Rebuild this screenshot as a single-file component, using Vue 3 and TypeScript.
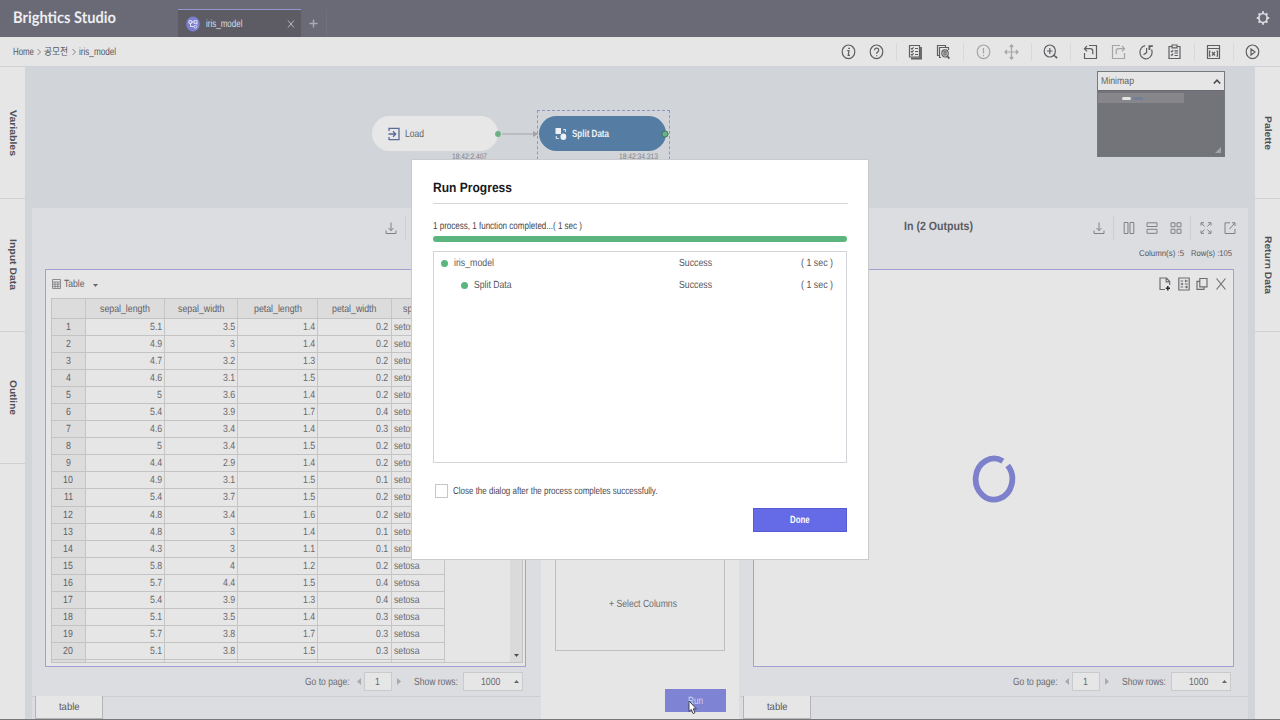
<script setup lang="ts">
import { h } from 'vue'

const FAMILY = '"Liberation Sans", "Noto Sans CJK KR", sans-serif'
const CONDENSE = 0.845
const pen = document.createElement('canvas').getContext('2d')

function naturalWidth(text: string, size: number, weight: number): number {
  if (!pen) return text.length * size * 0.5
  pen.font = `${weight} ${size}px ${FAMILY}`
  return pen.measureText(text).width * CONDENSE
}

interface LabelProps {
  t: string
  w?: number
  s?: number
  b?: number
  family?: string
  vertical?: boolean
}

// Condensed single-line text, fitted to the width `w` when one is given.
function Label(props: LabelProps) {
  const size = props.s ?? 10.4
  const weight = props.b ?? 400
  const width = props.w ?? naturalWidth(props.t, size, weight)
  const height = Math.round(size * 1.2)
  const base = height / 2 + size * 0.355 - 0.8
  const v = props.vertical
  return h('svg', { width: v ? height : width, height: v ? width : height, overflow: 'visible' }, [
    h('text', {
      x: 0,
      y: base,
      transform: v ? `translate(${height} 0) rotate(90)` : undefined,
      textLength: width,
      lengthAdjust: 'spacingAndGlyphs',
      'text-rendering': 'geometricPrecision',
      fill: 'currentColor',
      'font-family': props.family ?? FAMILY,
      'font-size': size,
      'font-weight': weight,
    }, props.t),
  ])
}
Label.props = { t: String, w: Number, s: Number, b: Number, family: String, vertical: Boolean }

interface Tool { id: string; path?: string; faint?: boolean; heavy?: string }
const circle = 'M8.5 2A6.3 6.8 0 1 1 8.5 15.6A6.3 6.8 0 1 1 8.5 2'
const tools: Tool[] = [
  { id: 'info', path: circle + 'M7.2 7.6H9L8.2 12.4H10', heavy: 'M9.1 4.8V5.9' },
  { id: 'help', path: circle + 'M6.5 7.2C6.5 4.5 10.7 4.5 10.7 7.2C10.7 9 8.6 9 8.6 10.8M8.6 12.2V13.2' },
  { id: 's1' },
  { id: 'checklist', path: 'M2.5 2.5H12.5V14H2.5ZM4 5.3L5 6.2L6.6 4.4M4 8.3L5 9.2L6.6 7.4M4 11.3L5 12.2L6.6 10.4M8 5.5H11M8 8.5H11M8 11.5H11', heavy: 'M14 4V15.5H4' },
  { id: 'inspect', path: 'M4 12.5H2.5V2.5H10.5V4M6 14.5H4.5V4.5H13.5V7M10 6.8A3.2 3.6 0 1 1 10 14A3.2 3.6 0 1 1 10 6.8M9 8.8H11V12H9Z', heavy: 'M12.2 13L14.4 15.6' },
  { id: 's2' },
  { id: 'alert', path: circle + 'M8.5 5V10.5M8.5 12V13.3', faint: true },
  { id: 'move', path: 'M8.5 2V16M2 9H15M6.7 4L8.5 2L10.3 4M6.7 14L8.5 16L10.3 14M4 7L2 9L4 11M13 7L15 9L13 11', faint: true },
  { id: 's3' },
  { id: 'zoom', path: 'M7.8 2A5.6 6 0 1 1 7.8 14A5.6 6 0 1 1 7.8 2M7.8 5V11M5 8H10.6M11.8 12.2L13 13.3', heavy: 'M13.2 13L15 15.2' },
  { id: 's4' },
  { id: 'undo', path: 'M2.5 10V15.5H14.5V2.5H7M2.5 5.7H8.3Q10.8 5.7 10.8 8.3V11.3M5 3L2.4 5.7L5 8.4' },
  { id: 'redo', path: 'M10 2.5H2.5V15.5H14.5V10M6.2 11.3V8.3Q6.2 5.7 8.7 5.7H14.5M12 3L14.6 5.7L12 8.4', faint: true },
  { id: 'history', path: 'M7.2 2.7A6.1 6.6 0 1 0 13.6 6.5M8.6 5V9.6L5.5 11.8', heavy: 'M11.4 7V3.2H14.8' },
  { id: 'clipboard', path: 'M5.5 3.5H3V15.5H14V3.5H11.5M6 2H11V4.8H6ZM5 8L5.8 8.8L7.2 7.2M5 11.5L5.8 12.3L7.2 10.7M8.5 7.8H12M8.5 10H12M8.5 12.5H12' },
  { id: 's5' },
  { id: 'variable', path: 'M2.5 2.5H14.5V15.5H2.5ZM2.5 5.5H14.5M5.5 8.2H4.5V13.2H5.5M11.5 8.2H12.5V13.2H11.5M7 9L10 12.5M10 9L7 12.5' },
  { id: 's6' },
  { id: 'play', path: circle + 'M7 6V12L11 9Z' },
]

const columns = ['sepal_length', 'sepal_width', 'petal_length', 'petal_width']
const rows: string[][] = [
  ['5.1', '3.5', '1.4', '0.2'], ['4.9', '3', '1.4', '0.2'], ['4.7', '3.2', '1.3', '0.2'],
  ['4.6', '3.1', '1.5', '0.2'], ['5', '3.6', '1.4', '0.2'], ['5.4', '3.9', '1.7', '0.4'],
  ['4.6', '3.4', '1.4', '0.3'], ['5', '3.4', '1.5', '0.2'], ['4.4', '2.9', '1.4', '0.2'],
  ['4.9', '3.1', '1.5', '0.1'], ['5.4', '3.7', '1.5', '0.2'], ['4.8', '3.4', '1.6', '0.2'],
  ['4.8', '3', '1.4', '0.1'], ['4.3', '3', '1.1', '0.1'], ['5.8', '4', '1.2', '0.2'],
  ['5.7', '4.4', '1.5', '0.4'], ['5.4', '3.9', '1.3', '0.4'], ['5.1', '3.5', '1.4', '0.3'],
  ['5.7', '3.8', '1.7', '0.3'], ['5.1', '3.8', '1.5', '0.3'],
]

const leftTabs = [
  { t: 'Variables', w: 46, k: 'a' }, { t: 'Input Data', w: 51, k: 'b' }, { t: 'Outline', w: 35, k: 'b' },
]
const rightTabs = [{ t: 'Palette', w: 34, k: 'a' }, { t: 'Return Data', w: 58, k: 'b' }]

const steps = [
  { name: 'iris_model', w: 40, child: false },
  { name: 'Split Data', w: 37.5, child: true },
]
</script>

<template>
  <div class="app">
    <header class="top">
      <Label class="brand" t="Brightics Studio" :w="103" :s="16" :b="700" family="Lato, sans-serif" />
      <div class="tab">
        <svg width="14" height="16" viewBox="0 0 14 16">
          <ellipse cx="7" cy="8" rx="6.8" ry="7.6" fill="#7c7fd0" />
          <path d="M3 4.7H5.8V7.3H3ZM8 4.7H11V7.3H8ZM5.8 6H8M4.5 7.3V10.5H7.8M11 7.3V8.5" fill="none" stroke="#e4e4f4" />
          <circle cx="9.4" cy="10.7" r="1.4" fill="none" stroke="#e4e4f4" />
        </svg>
        <Label class="tab-name" t="iris_model" :w="36.5" />
        <svg width="8" height="8" viewBox="0 0 8 8"><path d="M1 .5L7 7.5M7 .5L1 7.5" stroke="#b6b7be" /></svg>
      </div>
      <div class="plus">
        <svg width="9" height="9" viewBox="0 0 9 9"><path d="M4.5 .5V8.5M.5 4.5H8.5" stroke="#a9aab2" stroke-width="1.4" /></svg>
      </div>
      <svg class="gear" width="14" height="16" viewBox="0 0 14 16">
        <ellipse cx="7" cy="8" rx="4.1" ry="4.5" fill="none" stroke="#dcdce2" stroke-width="1.7" />
        <path d="M7 3.5V1.2M7 12.5V14.8M3 8H.8M11 8H13.2M4 4.8L2.6 3.3M10 11.2L11.4 12.7M10 4.8L11.4 3.3M4 11.2L2.6 12.7" stroke="#dcdce2" stroke-width="1.9" />
      </svg>
    </header>

    <nav class="bar">
      <div class="crumbs">
        <Label t="Home" :w="21" />
        <svg width="4" height="8" viewBox="0 0 4 8"><path d="M.5 1L3.5 4L.5 7" fill="none" stroke="#85868a" /></svg>
        <Label t="공모전" :w="24" />
        <svg width="4" height="8" viewBox="0 0 4 8"><path d="M.5 1L3.5 4L.5 7" fill="none" stroke="#85868a" /></svg>
        <Label t="iris_model" :w="37" />
      </div>
      <div class="tools">
        <template v-for="tool in tools" :key="tool.id">
          <span v-if="tool.path" class="tool" :class="{ faint: tool.faint }">
            <svg width="17" height="18" viewBox="0 0 17 18" fill="none" stroke="currentColor">
              <path :d="tool.path" stroke-width="1.2" />
              <path v-if="tool.heavy" :d="tool.heavy" stroke-width="1.8" />
            </svg>
          </span>
          <i v-else class="sep" :class="tool.id" />
        </template>
      </div>
    </nav>

    <div class="body">
      <aside class="side left">
        <div v-for="s in leftTabs" :key="s.t" class="side-tab" :class="s.k">
          <Label :t="s.t" :w="s.w" :s="9.5" :b="700" vertical />
        </div>
      </aside>

      <main class="main">
        <section class="canvas">
          <div class="node load">
            <svg width="12" height="14" viewBox="0 0 12 14" fill="none" stroke="#5a6b98" stroke-width="1.3">
              <path d="M1 4V1.3H11V12.7H1V10M.5 7H7.5M5 4.3L7.7 7L5 9.7" />
            </svg>
            <Label t="Load" :w="19" />
          </div>
          <svg class="link" width="44" height="8" viewBox="0 0 44 8">
            <circle cx="3" cy="4" r="2.9" fill="#6cb086" />
            <path d="M7 4H40" stroke="#a3a4a7" stroke-width="1.2" />
            <path d="M38 1L43.5 4L38 7Z" fill="#a3a4a7" />
          </svg>
          <Label class="time t1" t="18:42:2.407" :w="35" :s="8" />
          <div class="selection" />
          <div class="node split">
            <svg width="12" height="14" viewBox="0 0 12 14">
              <path d="M.5 1H6V7H.5Z" fill="#eef2f6" />
              <ellipse cx="8.4" cy="9.8" rx="2.9" ry="3.2" fill="#eef2f6" />
              <path d="M8 2.5H10.4V5M1.3 9V11.5H4" fill="none" stroke="#d5dde6" stroke-width="1.2" />
            </svg>
            <Label t="Split Data" :w="37" :b="700" />
          </div>
          <svg class="port" width="8" height="8" viewBox="0 0 8 8"><circle cx="4" cy="4" r="3.1" fill="#6cb086" stroke="#3c7864" /></svg>
          <Label class="time t2" t="18:42:34.313" :w="39" :s="8" />
          <div class="minimap">
            <div class="mini-head">
              <Label t="Minimap" :w="33" :s="10" />
              <svg width="8" height="5" viewBox="0 0 8 5"><path d="M.8 4.5L4 1.2L7.2 4.5" fill="none" stroke="#4b4c52" stroke-width="1.6" /></svg>
            </div>
            <div class="mini-body">
              <div class="mini-view"><i class="m1" /><i class="m2" /></div>
              <svg class="grip" width="6" height="6" viewBox="0 0 6 6"><path d="M6 0V6H0Z" fill="#a3a4a8" /></svg>
            </div>
          </div>
        </section>

        <section class="panel">
          <div v-for="side in ['in', 'out']" :key="side" class="column" :class="side">
            <div class="head">
              <Label v-if="side === 'out'" class="title" t="In (2 Outputs)" :w="69" :s="12" :b="700" />
              <div class="head-icons">
                <svg class="ic dl" width="12" height="14" viewBox="0 0 12 14"><path d="M1 9.5V12.5H11V9.5M6 1.5V9.5M3.5 7L6 9.7L8.5 7" /></svg>
                <i class="rule" />
                <template v-if="side === 'out'">
                  <svg class="ic c1" width="12" height="14" viewBox="0 0 12 14"><path d="M1.2 1.5H5V12.5H1.2ZM7 1.5H10.8V12.5H7Z" /></svg>
                  <svg class="ic c2" width="12" height="14" viewBox="0 0 12 14"><path d="M1 1.8H11V5.5H1ZM1 8.3H11V12.3H1Z" /></svg>
                  <svg class="ic c3" width="12" height="14" viewBox="0 0 12 14"><path d="M1 1.8H5V5.8H1ZM7 1.8H11V5.8H7ZM1 8.2H5V12.3H1ZM7 8.2H11V12.3H7Z" /></svg>
                  <i class="rule" />
                  <svg class="ic c4" width="12" height="14" viewBox="0 0 12 14"><path d="M1 4.5V1.7H4M1.2 2L4.6 5.4M11 4.5V1.7H8M10.8 2L7.4 5.4M1 9.5V12.3H4M1.2 12L4.6 8.6M11 9.5V12.3H8M10.8 12L7.4 8.6" /></svg>
                  <svg class="ic c5" width="12" height="14" viewBox="0 0 12 14"><path d="M6 1.8H1V12.5H11V8M8 1.8H11V5M10.8 2L5.5 8" /></svg>
                </template>
              </div>
              <div v-if="side === 'out'" class="counts">
                <Label t="Column(s) :5" :w="45" :s="8.4" />
                <Label t="Row(s) :105" :w="41" :s="8.4" />
              </div>
            </div>

            <div v-if="side === 'in'" class="box">
              <div class="chart-type">
                <svg width="9" height="10" viewBox="0 0 9 10" fill="none" stroke="#838387"><path d="M.5 .5H8.5V9.5H.5ZM.5 3H8.5M.5 5.2H8.5M.5 7.4H8.5M3 3V9.5M5.8 3V9.5" stroke-width=".9" /></svg>
                <Label t="Table" :w="20.5" />
                <svg class="caret" width="5" height="3" viewBox="0 0 5 3"><path d="M0 0H5L2.5 3Z" fill="#66676b" /></svg>
              </div>
              <div class="sheet">
                <div class="grid">
                  <div class="row headrow">
                    <div class="cell" />
                    <div v-for="c in columns" :key="c" class="cell"><Label :t="c" /></div>
                    <div class="cell"><Label t="species" /></div>
                  </div>
                  <div v-for="(r, i) in rows" :key="i" class="row">
                    <div class="cell num"><Label :t="String(i + 1)" /></div>
                    <div v-for="(v, j) in r" :key="j" class="cell val"><Label :t="v" /></div>
                    <div class="cell sp"><Label t="setosa" :w="25.5" /></div>
                  </div>
                  <div class="row last">
                    <div v-for="n in 6" :key="n" class="cell" :class="{ num: n === 1 }" />
                  </div>
                </div>
                <div class="scroll">
                  <svg width="5" height="3" viewBox="0 0 5 3"><path d="M0 0H5L2.5 3Z" fill="#4d4e52" /></svg>
                </div>
              </div>
            </div>

            <div v-else class="box">
              <div class="box-icons">
                <svg class="ic" width="12" height="14" viewBox="0 0 12 14"><path d="M6 12.5H1V1H7.5L10.7 4.5V8M7.2 1V4.8H10.7" /><path d="M8.8 9V13.4M6.8 11.2H11" class="plus-mark" /></svg>
                <svg class="ic" width="12" height="14" viewBox="0 0 12 14"><path d="M.8 1H11.2V13H.8ZM2.5 4H5.2M2.5 7H5.2M2.5 10H5.2M6.8 4H9.8M6.8 7H9.8M6.8 10H9.8M7.6 2.8V5.2M4.2 5.8V8.2M8.6 8.8V11.2" /></svg>
                <svg class="ic" width="12" height="14" viewBox="0 0 12 14"><path d="M3.8 1.5H11V9.8H3.8ZM3.8 4.3H1V12.4H8V9.8" /></svg>
                <svg class="ic" width="12" height="14" viewBox="0 0 12 14"><path d="M1.5 1.5L10.5 12.5M10.5 1.5L1.5 12.5" /></svg>
              </div>
              <div class="loading">
                <svg width="44" height="48" viewBox="-22 -24 44 48">
                  <path d="M13.7 -13.5A18.3 20.5 0 1 1 8.8 -17.9" fill="none" stroke="#7d80cb" stroke-width="5.8" />
                </svg>
              </div>
            </div>

            <div class="pager">
              <Label t="Go to page:" :w="44.5" />
              <svg class="prev" width="4" height="7" viewBox="0 0 4 7"><path d="M4 0V7L0 3.5Z" fill="#a9aaae" /></svg>
              <div class="field page"><Label t="1" /></div>
              <svg class="next" width="4" height="7" viewBox="0 0 4 7"><path d="M0 0V7L4 3.5Z" fill="#a9aaae" /></svg>
              <Label class="show" t="Show rows:" :w="44" />
              <div class="field count">
                <Label t="1000" :w="19.5" />
                <svg width="5" height="3" viewBox="0 0 5 3"><path d="M0 3H5L2.5 0Z" fill="#66676b" /></svg>
              </div>
            </div>
            <div class="tabs"><div class="sheet-tab"><Label t="table" :w="20.5" /></div></div>
          </div>

          <div class="middle">
            <div class="drop"><Label t="+ Select Columns" :w="68" /></div>
            <button class="run"><Label t="Run" :w="15" /></button>
          </div>
        </section>
      </main>

      <aside class="side right">
        <div v-for="s in rightTabs" :key="s.t" class="side-tab" :class="s.k">
          <Label :t="s.t" :w="s.w" :s="9.5" :b="700" vertical />
        </div>
      </aside>
    </div>
    <div class="edge" />

    <div class="dialog">
      <div class="dialog-title"><Label t="Run Progress" :w="79" :s="13.4" :b="700" /></div>
      <Label class="status" t="1 process, 1 function completed...( 1 sec )" :w="149" :s="10.2" />
      <div class="progress" />
      <div class="list">
        <div v-for="s in steps" :key="s.name" class="step" :class="{ child: s.child }">
          <i class="dot" />
          <Label class="name" :t="s.name" :w="s.w" />
          <Label class="state" t="Success" :w="33" />
          <Label t="( 1 sec )" :w="32" />
        </div>
      </div>
      <div class="check"><i /><Label t="Close the dialog after the process completes successfully." :w="204.5" :s="10" /></div>
      <button class="done"><Label t="Done" :w="19.5" :b="700" /></button>
    </div>

    <svg class="cursor" width="10" height="15" viewBox="0 0 10 15">
      <path d="M1 1V11.5L3.3 9.4L5 13.6L6.9 12.7L5.3 8.8H8.3Z" fill="#fff" stroke="#333" stroke-width=".9" />
    </svg>
  </div>
</template>

<style>
html, body { margin: 0; overflow: hidden; }
</style>

<style scoped>
.app { width: 1280px; height: 720px; position: relative; overflow: hidden; display: flex; flex-direction: column; background: #d1d4d8; color: #5f6066; font-family: "Liberation Sans", "Noto Sans CJK KR", sans-serif; box-sizing: border-box; }
.app * { box-sizing: border-box; }
svg { display: block; flex: none; }
button { border: 0; padding: 0; display: flex; align-items: center; justify-content: center; }

.top { height: 37px; flex: none; display: flex; align-items: stretch; background: #696a76; color: #eeeef2; }
.brand { margin: 9px 0 0 13px; }
.tab { width: 123px; margin: 9px 0 0 62px; border-top: 1px solid #9497cf; background: #5d5c65; display: flex; align-items: center; padding: 0 6px 0 8px; }
.tab-name { margin: 0 auto 0 6px; color: #dcdce1; }
.plus { width: 26px; margin-top: 9px; border-right: 1px solid #70717c; display: flex; align-items: center; justify-content: center; }
.gear { margin: 10px 10px 0 auto; }

.bar { height: 30px; flex: none; display: flex; justify-content: space-between; align-items: center; background: #e6e6e6; border-bottom: 1px solid #d0d2d8; padding: 0 14px 0 13px; }
.crumbs { display: flex; align-items: center; gap: 3.2px; color: #55565b; }
.tools { display: flex; align-items: center; }
.tool { width: 28px; display: flex; justify-content: center; color: #5f5f63; }
.faint { color: #a5a5a8; }
.sep { width: 1px; height: 18px; margin: 0 4px 0 6px; background: #d9d9db; }
.s2, .s4 { margin-right: 5px; }

.body { flex: 1; min-height: 0; display: flex; }
.side { width: 25px; flex: none; background: #e6e6e6; color: #505056; display: flex; flex-direction: column; }
.side-tab { display: flex; justify-content: center; align-items: center; border-bottom: 1px solid #cfd1d5; height: 132.5px; }
.side-tab.a { height: 132px; }
.main { flex: 1; display: flex; flex-direction: column; min-width: 0; }

.canvas { height: 141px; flex: none; position: relative; }
.node { position: absolute; top: 49px; height: 35px; border-radius: 18px; display: flex; align-items: center; }
.load { left: 347px; width: 126px; background: #e7e7e7; padding-left: 16px; gap: 5px; color: #5f6064; }
.split { left: 514px; width: 127px; background: #557da3; padding-left: 16px; gap: 5px; color: #edf0f4; }
.link { position: absolute; left: 470px; top: 63px; }
.port { position: absolute; left: 636px; top: 63px; }
.selection { position: absolute; left: 512px; top: 43px; width: 133px; height: 60px; border: 1px dashed #9194c6; }
.time { position: absolute; top: 85px; color: #7f8086; }
.t1 { left: 427px; }
.t2 { left: 594px; }
.minimap { position: absolute; left: 1072px; top: 4px; width: 128px; height: 86px; border: 1px solid #77787e; display: flex; flex-direction: column; }
.mini-head { height: 19px; background: #e6e6e6; border-bottom: 1px solid #6a6b70; display: flex; align-items: center; justify-content: space-between; padding: 0 3px; }
.mini-body { flex: 1; background: #73737a; display: flex; flex-direction: column; justify-content: space-between; padding-top: 2px; }
.mini-view { width: 86px; height: 10px; background: #86868b; display: flex; align-items: center; padding-left: 24px; gap: 2px; }
.m1 { width: 9px; height: 3px; border-radius: 2px; background: #e4e4e5; }
.m2 { width: 10px; height: 3px; border-radius: 2px; background: #727e98; }
.grip { align-self: flex-end; margin: 0 3px 3px 0; }

.panel { flex: 1; min-height: 0; margin: 0 7px; background: #dcdde0; display: flex; }
.column { width: 508px; display: flex; flex-direction: column; }
.in { order: 1; }
.middle { order: 2; }
.out { order: 3; }
.head { height: 61px; flex: none; display: grid; grid-template-columns: 233px 1fr; grid-template-rows: 40px 1fr; }
.title { margin: 11.5px 0 0 164px; color: #5a5b61; }
.head-icons { grid-column: 2; display: flex; align-items: center; padding-left: 120px; }
.in .head-icons { grid-column: 1 / 3; padding-left: 353px; }
.ic { fill: none; stroke: #808085; stroke-width: 1; }
.rule { width: 1px; height: 24px; background: #cdced2; margin: 0 9px 0 8px; }
.c2, .c3 { margin-left: 11.3px; }
.c5 { margin-left: 12px; }
.counts { grid-column: 2; display: flex; justify-content: flex-end; gap: 7px; padding: 1px 16px 0 0; color: #55565c; }

.box { width: 481px; height: 398px; margin-left: 13px; flex: none; border: 1px solid #a2a2d2; background: #e6e6e6; display: flex; flex-direction: column; }
.chart-type { height: 28px; display: flex; align-items: center; padding-left: 6px; gap: 2.5px; }
.caret { margin: 3px 0 0 6px; }
.sheet { width: 472px; height: 365px; margin-left: 5px; border: 1px solid #c3c3c0; display: flex; justify-content: space-between; overflow: hidden; }
.grid { width: 393px; }
.row { height: 17.05px; display: grid; grid-template-columns: 33.5px 79.5px 73px 80px 73.5px 53.5px; }
.headrow { height: 20px; background: #dcdcdc; }
.last { height: 8px; }
.cell { border-right: 1px solid #c6c6c6; border-bottom: 1px solid #c3c3c3; display: flex; align-items: center; justify-content: center; overflow: hidden; }
.num { background: #dcdcdc; }
.val { justify-content: flex-end; padding-right: 2px; color: #696970; }
.sp { justify-content: flex-start; padding-left: 2px; color: #696970; }
.scroll { width: 12px; background: #dadada; display: flex; align-items: flex-end; justify-content: center; padding-bottom: 5px; }

.box-icons { height: 28px; display: flex; align-items: center; justify-content: flex-end; gap: 6.6px; padding-right: 6px; }
.box-icons .ic { stroke: #6c6c71; stroke-width: 1.15; }
.plus-mark { stroke: #2c2c30; stroke-width: 1.5; }
.loading { flex: 1; display: flex; justify-content: center; padding-top: 157px; }

.pager { height: 29px; flex: none; display: flex; align-items: center; padding-left: 273px; color: #696a70; }
.prev { margin-left: 7px; }
.field { height: 19px; border: 1px solid #c9cacc; background: #e6e6e6; display: flex; align-items: center; }
.page { width: 28px; margin: 0 5px 0 3px; justify-content: center; }
.show { margin-left: 13.5px; }
.count { width: 60px; margin-left: 5px; padding: 0 3px 0 17px; justify-content: space-between; }
.tabs { flex: 1; border-top: 1px solid #cccdd1; padding-left: 3px; }
.sheet-tab { width: 68px; height: 23px; border: 1px solid #b4b4b7; border-top: 0; background: #e6e6e6; display: flex; align-items: center; justify-content: center; margin-top: -1px; color: #55565b; }

.middle { width: 200px; background: linear-gradient(90deg, #dcdde0 1px, #e6e6e6 1px, #e6e6e6 199px, #dcdde0 199px); display: flex; flex-direction: column; justify-content: flex-end; padding: 0 14px 7px 15px; }
.drop { width: 170px; height: 94px; border: 1px solid #bfbfc1; display: flex; align-items: center; justify-content: center; padding-left: 6px; color: #6c6c71; }
.run { align-self: flex-end; width: 61px; height: 23px; margin-top: 38px; background: #7f83d3; color: #d3d4ee; }
.edge { height: 1px; flex: none; background: #77777b; }

.dialog { position: absolute; left: 412px; top: 160px; width: 456px; height: 399px; background: #fff; box-shadow: 0 0 0 1px #cacbce; padding: 0 21px; display: flex; flex-direction: column; }
.dialog-title { height: 44px; width: 415px; flex: none; border-bottom: 1px solid #d5d6d9; padding-top: 19.5px; color: #17171b; }
.status { margin: 16px 0 0; color: #45464b; }
.progress { height: 6px; flex: none; margin: 4px 0 0; border-radius: 3px; background: #5cb57e; }
.list { height: 212px; flex: none; margin-top: 9px; border: 1px solid #d3d4d9; }
.step { height: 22px; display: flex; align-items: center; padding: 0 13px 0 7px; color: #55565b; }
.child { padding-left: 27px; }
.dot { width: 7px; height: 7px; border-radius: 50%; background: #5cb57e; margin-right: 6px; }
.name { margin-right: auto; }
.state { margin-right: 89px; }
.check { display: flex; align-items: center; gap: 5px; margin: 21px 0 0 2px; color: #48474f; }
.check i { width: 13px; height: 14px; border: 1px solid #c6c7ca; }
.done { align-self: flex-end; width: 94px; height: 24px; margin-top: 10px; background: #656be6; border: 1px solid #565bd2; color: #fff; }
.cursor { position: absolute; left: 688px; top: 700px; }
</style>
